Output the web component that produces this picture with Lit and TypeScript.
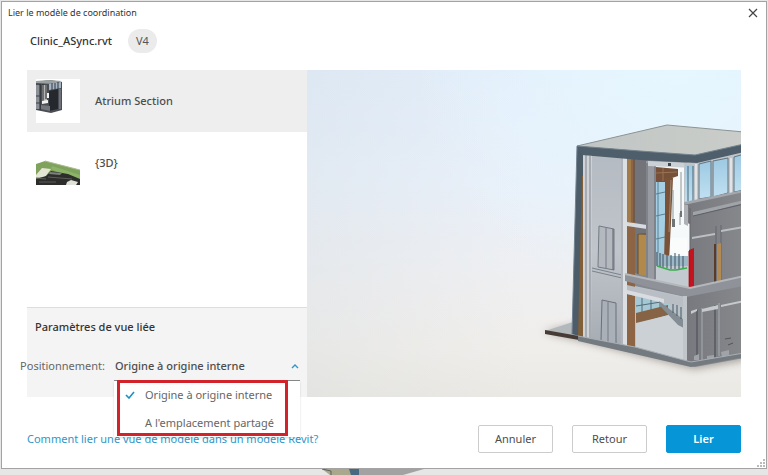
import { LitElement, html, css, svg } from "lit";
import { customElement, state } from "lit/decorators.js";

const atriumThumb = svg`
  <rect width="44" height="44" fill="#fff"/>
  <path d="M0 3 L14 1 L26 3 L26 31 L15 34 L0 31Z" fill="#4a4e54"/>
  <path d="M0 2 L12 1 L26 2 L17 5 L0 4Z" fill="#9a9fa0"/>
  <path d="M0 6H4V30H0Z" fill="#8b9096"/>
  <path d="M6 6H11V22H6Z" fill="#b5b5b3"/>
  <path d="M7 5V24M10 6V20M4 5V31" stroke="#24282d"/>
  <path d="M13 5L25 3V9L13 11Z" fill="#a4b4c4"/>
  <path d="M16 4V11M19 4V10M22 3V10" stroke="#30363e"/>
  <path d="M13 12L22 10V30L13 32Z" fill="#25282d"/>
  <path d="M23 10H25V30H23Z" fill="#6d727a"/>
  <path d="M11 14h2v5h-2zM6 22l6-1v3l-6 1z" fill="#f2f2f0"/>
  <path d="M5 26L14 27V32L5 30Z" fill="#73767b"/>
  <path d="M0 17H5M0 24H5" stroke="#3c4046"/>`;

const siteThumb = svg`
  <path d="M0 23L9 20L44 29V44H0Z" fill="#7fa35d"/>
  <path d="M9 20L44 29" stroke="#a9bd8f"/>
  <path d="M16 25L44 34V38L34 36L15 28Z" fill="#8db368"/>
  <path d="M0 34L6 27L15 28L9 36L0 37Z" fill="#e4e6d4"/>
  <path d="M10 35L15 30L32 33L44 38V44H0V38Z" fill="#2d2e2c"/>
  <path d="M14 31L26 32L24 34L13 33Z" fill="#7b8078"/>
  <path d="M0 37L10 38M3 41H20M12 36L36 38" stroke="#5a5d58"/>
  <path d="M31 41L35 39L42 41L40 44H30Z" fill="#e0e2da"/>`;

const building = svg`
  <defs>
    <linearGradient id="roof" x1="0" y1="0" x2="1" y2="0">
      <stop offset="0" stop-color="#c0c6c5"/><stop offset="1" stop-color="#cacdc9"/>
    </linearGradient>
    <linearGradient id="panel" x1="0" y1="0" x2="0" y2="1">
      <stop offset="0" stop-color="#b5bbc2"/><stop offset=".5" stop-color="#c0c5cb"/><stop offset="1" stop-color="#a6acb3"/>
    </linearGradient>
    <linearGradient id="glass" x1="0" y1="0" x2="0" y2="1">
      <stop offset="0" stop-color="#9dc9e2"/><stop offset="1" stop-color="#c0e0f1"/>
    </linearGradient>
    <linearGradient id="wall" x1="0" y1="0" x2="1" y2="0">
      <stop offset="0" stop-color="#77797e"/><stop offset="1" stop-color="#86888c"/>
    </linearGradient>
    <filter id="soft" x="-20%" y="-50%" width="140%" height="200%"><feGaussianBlur stdDeviation="4"/></filter>
  </defs>
  <path d="M543 332L578 340L694 369L745 360V350L600 320Z" fill="#77716b" opacity=".65" filter="url(#soft)"/>
  <path d="M545 331L573 322L580 324V338Z" fill="#b3b9bb"/>
  <path d="M545 330L579 336V340L545 334Z" fill="#473c35"/>
  <path d="M577 146L744 146V358L695 367L578 338Z" fill="#85888e"/>
  <!-- outer slab and left bays -->
  <path d="M577 146L584 153L579 336L572 334Z" fill="#4c5c69"/>
  <path d="M577 146L572 334" stroke="#738492"/>
  <path d="M582 176L584 176L583 338L578 337Z" fill="#805f39"/>
  <path d="M583 154H592V340L583 337Z" fill="#cfd2d6"/>
  <path d="M586 155V338M590 156V339" stroke="#7e858d"/>
  <path d="M592 156H622V346L591 339Z" fill="url(#panel)"/>
  <path d="M592 268L622 275M592 271L622 278" stroke="#7b828a" fill="none"/>
  <path d="M599 226L614 229V270L598 267Z" fill="#b4b9c0" stroke="#747b84"/>
  <path d="M606 228V268" stroke="#747b84"/>
  <path d="M613 229V270" stroke="#5e636d"/>
  <path d="M602 300L616 303V344L601 341Z" fill="#aab0b7" stroke="#6b707b"/>
  <path d="M608 302V342" stroke="#747b84"/>
  <path d="M621 157H627V347L621 345Z" fill="#dcdfe2"/>
  <path d="M622 157V345" stroke="#858b93"/>
  <path d="M627 158H635V348L627 347Z" fill="#8d6544"/>
  <path d="M627 158H631V222H627Z" fill="#a17b49"/>
  <path d="M635 158H647V275L635 273Z" fill="#73747a"/>
  <path d="M634 159V222" stroke="#51535a"/>
  <path d="M627 222L647 225V229L627 226Z" fill="#d7dce1"/>
  <path d="M638 233L647 235V276L638 274Z" fill="#b0894b"/>
  <path d="M638 274V234H647" stroke="#604d32" fill="none"/>
  <!-- atrium -->
  <path d="M655 163L690 165V290L655 281Z" fill="#f6f9fa"/>
  <path d="M656 180H665V258H656Z" fill="#a4cfe4"/>
  <path d="M656 194L665 192M656 216L665 214M656 239L665 237M658 180V258" stroke="#5e7e90" fill="none"/>
  <path d="M656 167L678 169V176L672 178V182H656Z" fill="#765039"/>
  <path d="M665 178L673 178L671 222L669 262H664L665 220Z" fill="#795238"/>
  <path d="M671 180L669 232" stroke="#a18973"/>
  <path d="M656 173L677 172M663 168V181" stroke="#9a7352"/>
  <path d="M673 190V223M681 172V212M680 213V225" stroke="#8f9596" fill="none"/>
  <path d="M672 219H675V227H672ZM680 211H682V217H680Z" fill="#6f7475"/>
  <path d="M656 265L688 265V289L656 280Z" fill="#c3cbd1"/>
  <path d="M656 252L670 256L688 256V266H656Z" fill="#9bb8c6"/>
  <path d="M671 238H687V255L671 252Z" fill="#fafcfc"/>
  <path d="M657 252V266M660 253V267M663 254V268M667 255V268M671 255V269M675 253V269M679 254V269M683 256V268" stroke="#3c5061" fill="none"/>
  <path d="M657 266L670 270L676 270L687 268" stroke="#35b04b" stroke-width="1.5" fill="none"/>
  <path d="M646 161L656 162V280L646 278Z" fill="#989ca2"/>
  <path d="M647 163V278M655 164V279" stroke="#686c72"/>
  <path d="M648 161L694 163V168L648 166Z" fill="#cbd0d4"/>
  <path d="M668 163H671V166H668Z" fill="#41464c"/>
  <!-- clerestory windows -->
  <path d="M684 163L744 151V193L684 204Z" fill="#bfc4c9"/>
  <path d="M685 165L694 165V201L685 203Z" fill="url(#glass)"/>
  <path d="M688 166V201M693 166V203" stroke="#4b6675"/>
  <path d="M699 164L711 161V197L699 199Z" fill="url(#glass)" stroke="#63747f"/>
  <path d="M713 161L728 158V193L713 197Z" fill="url(#glass)" stroke="#63747f"/>
  <path d="M734 157L744 154V190L734 192Z" fill="url(#glass)" stroke="#63747f"/>
  <path d="M696 164V202M731 158V194" stroke="#e1e3e5" stroke-width="2"/>
  <path d="M684 204L744 191V280L690 292V224L684 222Z" fill="url(#wall)"/>
  <path d="M684 202L744 190V192L684 205Z" fill="#a3a7ac"/>
  <path d="M684 205H688V226L684 224Z" fill="#adb1b6"/>
  <path d="M693 212L744 200V203L693 216Z" fill="#a0a3a8"/>
  <path d="M693 216L744 204" stroke="#5d6067"/>
  <path d="M690 208V290M716 226V284M721 225V282" stroke="#65676d"/>
  <path d="M692 237L715 233V235L692 239ZM721 230L744 226V228L721 232Z" fill="#bdc0c3"/>
  <path d="M717 244L721 243V283L717 284Z" fill="#b28a54"/>
  <path d="M715 244V284" stroke="#583b28" stroke-width="2"/>
  <path d="M689 250L694 248V288H689Z" fill="#c2131f"/>
  <path d="M689 251V287" stroke="#7c1821"/>
  <!-- middle floor and lower storey -->
  <path d="M635 286L686 297V362L635 348Z" fill="#bac2c8"/>
  <path d="M636 292L669 299V315L636 324Z" fill="#a5c8d5"/>
  <path d="M636 306L667 301M642 296V314M651 298V313M660 300V310" stroke="#526d79"/>
  <path d="M636 313L668 305V315L636 324Z" fill="#866344"/>
  <path d="M636 323L669 315L684 329V361L636 348Z" fill="#cbd1d5"/>
  <path d="M627 285L684 298V306L664 303L627 294Z" fill="#b9bec4"/>
  <path d="M627 290L664 299V303L627 294Z" fill="#d9dde1"/>
  <path d="M659 301L684 320V328L678 325L661 307Z" fill="#848d94"/>
  <path d="M673 304V313M677 305V316M681 307V319" stroke="#435864"/>
  <path d="M625 274L690 288L744 276V286L690 298L625 281Z" fill="#8f9399"/>
  <path d="M625 274L690 288L744 276" fill="none" stroke="#b4b8bc" stroke-width="2"/>
  <path d="M686 297L744 286V358L686 365Z" fill="url(#wall)"/>
  <path d="M683 296H687V364L683 362Z" fill="#c1c6ca"/>
  <path d="M702 308V360M719 303V356" stroke="#a8acb0"/>
  <path d="M697 310V360M715 305V357" stroke="#5f6269" stroke-width="2"/>
  <path d="M691 311L697 309V311L691 314ZM702 309L718 305V309L702 312ZM721 305L744 300V302L721 307Z" fill="#c6cacd"/>
  <path d="M694 356L699 354V360H694ZM707 356L714 355V359H707ZM721 352L729 350V355L722 357Z" fill="#a0a4a8"/>
  <path d="M725 339L731 338M728 345L733 343" stroke="#51565c"/>
  <path d="M578 336L635 347L691 362L744 353V357L691 367L578 341Z" fill="#737a80"/>
  <path d="M578 336L635 347L691 362L744 353" fill="none" stroke="#a9afb4"/>
  <!-- roof -->
  <path d="M577 146L667 125L744 132V146L697 156L640 151Z" fill="url(#roof)"/>
  <path d="M577 146L667 125L744 132" fill="none" stroke="#8b9494"/>
  <path d="M577 146L640 151L695 155L744 144V152L697 163L640 160L582 155Z" fill="#4e5e6b"/>
  <path d="M577 146L640 151L695 155L744 144" fill="none" stroke="#75838e"/>`;

@customElement("app-root")
export class AppRoot extends LitElement {
  @state() private view = 0;
  @state() private position = 0;
  @state() private open = true;

  private views = [
    { name: "Atrium Section", thumb: atriumThumb },
    { name: "{3D}", thumb: siteThumb },
  ];
  private positions = ["Origine à origine interne", "A l'emplacement partagé"];

  static styles = css`
    * { box-sizing: border-box; }
    :host {
      box-sizing: border-box;
      display: flex;
      flex-direction: column;
      min-height: 100vh;
      padding: 1px 1px 0;
      background: #e6e6e6;
      color: #4d4d4d;
      font: 11px/16px "Noto Sans", "Open Sans", sans-serif;
    }
    button, select { font: inherit; color: inherit; margin: 0; cursor: pointer; }
    h1, h2, ul { margin: 0; padding: 0; font: inherit; list-style: none; }
    .dialog {
      position: relative;
      flex: 1;
      display: flex;
      flex-direction: column;
      background: #fff;
      border: 1px solid #a3a3a3;
    }
    .backdrop { display: block; width: 100%; height: 6px; flex: none; }
    .titlebar {
      display: flex;
      justify-content: space-between;
      align-items: center;
      height: 22px;
      padding: 0 6px;
      font-size: 9px;
      color: #333;
    }
    .close { display: flex; padding: 2px; border: 0; background: none; }
    .file {
      display: flex;
      align-items: center;
      gap: 16px;
      height: 46px;
      padding: 0 28px 12px;
      color: #333;
      font-weight: 500;
    }
    .badge {
      padding: 4px 8px;
      border-radius: 12px;
      background: #ebebeb;
      color: #555;
      font-weight: 400;
    }
    .body { flex: 1; display: flex; margin: 0 25px; }
    .side { width: 280px; flex: none; display: flex; flex-direction: column; }
    .views { flex: 1; }
    .view {
      display: flex;
      align-items: center;
      gap: 15px;
      width: 100%;
      padding: 9px;
      border: 0;
      background: none;
      font-weight: 500;
      text-align: left;
    }
    .view.selected { background: #eee; }
    .thumb { width: 44px; height: 44px; flex: none; }
    .settings {
      height: 90px;
      border-top: 1px solid #ddd;
      background: #f4f4f4;
    }
    .settings h2 { padding: 11px 8px; color: #333; font-weight: 500; }
    .field {
      display: flex;
      justify-content: flex-end;
      align-items: center;
      gap: 9px;
      padding-right: 7px;
    }
    .label { padding-top: 4px; color: #666; white-space: nowrap; }
    .combo { position: relative; width: 186px; flex: none; }
    select {
      display: block;
      width: 100%;
      height: 35px;
      padding: 6px 20px 0 1px;
      appearance: none;
      border: 0;
      border-bottom: 1px solid #888;
      border-radius: 0;
      background: transparent;
      font-weight: 500;
      outline: 0;
    }
    .caret { position: absolute; right: 1px; top: 16px; pointer-events: none; }
    .menu {
      position: absolute;
      z-index: 1;
      top: 35px;
      left: 0;
      right: 0;
      background: #fff;
      box-shadow: 0 1px 2px rgba(0, 0, 0, 0.15);
    }
    .option {
      display: flex;
      align-items: center;
      gap: 10px;
      width: 100%;
      height: 28px;
      padding: 0 11px;
      border: 0;
      background: none;
      color: #666;
      white-space: nowrap;
    }
    .tick { width: 10px; height: 8px; flex: none; }
    .marker {
      position: absolute;
      z-index: 2;
      top: 34px;
      left: 3px;
      right: 12px;
      height: 56px;
      border: 3px solid #d2232a;
      pointer-events: none;
    }
    .preview {
      flex: 1;
      min-width: 0;
      position: relative;
      background:
        radial-gradient(ellipse at 85% 0%, rgba(230, 247, 255, 1), rgba(230, 247, 255, 0) 50%),
        linear-gradient(90deg, rgba(200, 210, 214, 0.22), rgba(255, 255, 255, 0) 50%),
        linear-gradient(#e3eefb, #e9f0f9 35%, #efeff1 65%, #f0eeeb 85%, #ebe9e4);
    }
    .scene { position: absolute; width: 100%; height: 100%; }
    .footer {
      display: flex;
      align-items: center;
      justify-content: space-between;
      height: 71px;
      padding: 13px 25px 0;
    }
    a { color: #2f96c9; text-decoration: none; white-space: nowrap; }
    .actions { display: flex; gap: 19px; }
    .action {
      width: 75px;
      height: 28px;
      padding: 0;
      border: 1px solid #ccc;
      border-radius: 2px;
      background: #fff;
    }
    .action.primary { border-color: #0696d7; background: #0696d7; color: #fff; font-weight: 600; }
    .grip { position: absolute; right: 0; bottom: 0; }
  `;

  private choose(i: number) {
    this.position = i;
    this.open = false;
  }

  render() {
    return html`
      <section class="dialog" role="dialog" aria-labelledby="title">
        <header class="titlebar">
          <h1 id="title">Lier le modèle de coordination</h1>
          <button class="close" aria-label="Fermer">
            <svg width="10" height="10" viewBox="0 0 10 10" fill="none" stroke="#444" stroke-width="1.2"><path d="M1 1L9 9M9 1L1 9"/></svg>
          </button>
        </header>
        <div class="file"><span>Clinic_ASync.rvt</span><span class="badge">V4</span></div>
        <main class="body">
          <div class="side">
            <ul class="views">
              ${this.views.map((v, i) => html`<li>
                <button class="view ${i === this.view ? "selected" : ""}" @click=${() => (this.view = i)}>
                  <svg class="thumb" viewBox="0 0 44 44" aria-hidden="true">${v.thumb}</svg>
                  <span>${v.name}</span>
                </button>
              </li>`)}
            </ul>
            <div class="settings">
              <h2>Paramètres de vue liée</h2>
              <div class="field">
                <label class="label" for="position">Positionnement:</label>
                <div class="combo">
                  <select id="position"
                    @mousedown=${(e: Event) => { e.preventDefault(); this.open = !this.open; }}
                    @change=${(e: Event) => this.choose((e.target as HTMLSelectElement).selectedIndex)}>
                    ${this.positions.map((p, i) => html`<option ?selected=${i === this.position}>${p}</option>`)}
                  </select>
                  <svg class="caret" width="8" height="8" viewBox="0 0 8 8" fill="none" stroke="#2f96c9" stroke-width="1.4"><path d="M1 6L4 3L7 6"/></svg>
                  ${this.open ? html`
                    <div class="menu">
                      ${this.positions.map((p, i) => html`
                        <button class="option" @click=${() => this.choose(i)}>
                          <svg class="tick" viewBox="0 0 10 8" fill="none" stroke="#1f8fc2" stroke-width="1.6">
                            ${i === this.position ? svg`<path d="M1 4L4 7L9 1"/>` : ""}
                          </svg>
                          <span>${p}</span>
                        </button>`)}
                    </div>
                    <div class="marker"></div>` : ""}
                </div>
              </div>
            </div>
          </div>
          <div class="preview">
            <svg class="scene" viewBox="307 70 434 327" preserveAspectRatio="xMaxYMid slice" role="img" aria-label="Atrium Section">${building}</svg>
          </div>
        </main>
        <footer class="footer">
          <a href="#aide">Comment lier une vue de modèle dans un modèle Revit?</a>
          <div class="actions">
            <button class="action">Annuler</button>
            <button class="action">Retour</button>
            <button class="action primary">Lier</button>
          </div>
        </footer>
        <svg class="grip" width="10" height="10" viewBox="0 0 10 10" fill="#bbb"><path d="M7 1h2v2h-2zM4 4h2v2h-2zM7 4h2v2h-2zM1 7h2v2h-2zM4 7h2v2h-2zM7 7h2v2h-2z"/></svg>
      </section>
      <svg class="backdrop" viewBox="0 0 766 6" preserveAspectRatio="xMidYMin slice" aria-hidden="true">
        <path d="M321 0H358V6H329Z" fill="#a9a78c"/>
        <path d="M321 0L330 2V6" fill="none" stroke="#5f6257"/>
        <path d="M348 0H358V6H350Z" fill="#486a80"/>
        <path d="M358 0H423L402 6H358Z" fill="#a2a2a3"/>
      </svg>`;
  }
}
